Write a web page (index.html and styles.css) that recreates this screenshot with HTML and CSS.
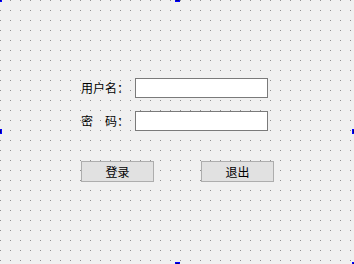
FILE: index.html
```html
<!DOCTYPE html>
<html lang="zh-CN">
<head>
<meta charset="utf-8">
<title>登录</title>
<link rel="stylesheet" href="styles.css">
</head>
<body>
<div class="form">
  <div class="fields">
    <div class="row">
      <span class="label">用户名：</span>
      <span class="edit"></span>
    </div>
    <div class="row">
      <span class="label">密　码：</span>
      <span class="edit"></span>
    </div>
  </div>
  <div class="buttons">
    <span class="btn">登录</span>
    <span class="btn">退出</span>
  </div>
  <span class="handle h-tl"></span>
  <span class="handle h-t"></span>
  <span class="handle h-l"></span>
  <span class="handle h-r"></span>
  <span class="handle h-b"></span>
  <span class="handle h-br"></span>
</div>
</body>
</html>
```
FILE: styles.css
```css
html, body {
  margin: 0;
  padding: 0;
  background: #f0f0f0;
}
.form {
  position: relative;
  width: 354px;
  height: 264px;
  overflow: hidden;
  box-sizing: border-box;
  padding: 78px 0 0 81px;
  background-color: #f0f0f0;
  background-image: conic-gradient(from 270deg at 1px 1px, #8f8f8f 90deg, transparent 0);
  background-size: 10px 10px;
  font-family: "Noto Sans CJK SC", "Noto Sans", sans-serif;
  font-size: 12px;
  color: #000;
}
.fields {
  display: flex;
  flex-direction: column;
  gap: 13px;
}
.row {
  display: flex;
  align-items: center;
  height: 20px;
}
.label {
  width: 54px;
  line-height: 14px;
  white-space: nowrap;
}
.edit {
  width: 133px;
  height: 20px;
  box-sizing: border-box;
  background: #fff;
  border: 1px solid #7a7a7a;
}
.buttons {
  display: flex;
  gap: 47px;
  margin-top: 30px;
}
.btn {
  width: 73px;
  height: 21px;
  box-sizing: border-box;
  background: #e1e1e1;
  border: 1px solid #adadad;
  display: flex;
  align-items: center;
  justify-content: center;
  line-height: 14px;
}
.handle {
  position: absolute;
  width: 5px;
  height: 5px;
  box-sizing: border-box;
  background: #00007f;
  border: 1px solid #0000ff;
}
.h-tl { left: -3px; top: -3px; }
.h-t { left: 175px; top: -3px; }
.h-l { left: -3px; top: 129px; }
.h-r { left: 352px; top: 129px; }
.h-b { left: 175px; top: 262px; }
.h-br { left: 352px; top: 262px; }
```
